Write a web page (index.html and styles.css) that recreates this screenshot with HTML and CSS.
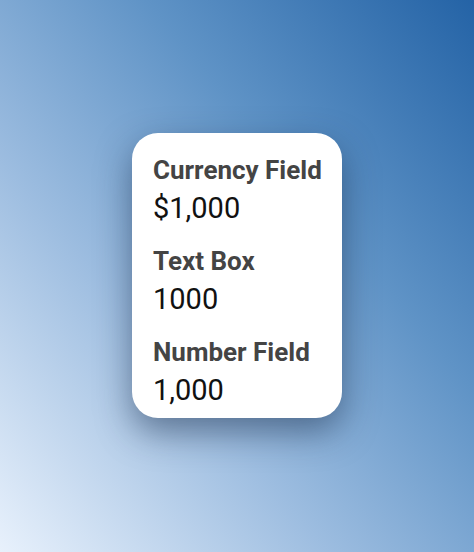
FILE: index.html
```html
<!DOCTYPE html>
<html>
<head>
<meta charset="utf-8">
<link rel="stylesheet" href="styles.css">
</head>
<body>
<div class="stage">
  <div class="card">
    <div class="field">
      <div class="label">Currency Field</div>
      <div class="value">$1,000</div>
    </div>
    <div class="field">
      <div class="label">Text Box</div>
      <div class="value">1000</div>
    </div>
    <div class="field">
      <div class="label">Number Field</div>
      <div class="value">1,000</div>
    </div>
  </div>
</div>
</body>
</html>
```
FILE: styles.css
```css
html, body {
  margin: 0;
  padding: 0;
  width: 474px;
  height: 552px;
  overflow: hidden;
}
body {
  font-family: Roboto, "Liberation Sans", sans-serif;
}
.stage {
  width: 474px;
  height: 552px;
  background: linear-gradient(50deg, #e8f1fc 0%, #9dbde0 35%, #5f93c6 65%, #2463a6 100%);
  display: flex;
  justify-content: center;
  padding-top: 133px;
  box-sizing: border-box;
}
.card {
  width: 210px;
  height: 285px;
  box-sizing: border-box;
  background: #fff;
  border-radius: 26px;
  box-shadow: 0 14px 34px rgba(20, 40, 70, 0.5);
  padding: 22px 0 0 21px;
  display: flex;
  flex-direction: column;
  gap: 15px;
}
.field {
  display: flex;
  flex-direction: column;
}
.label {
  font-size: 26px;
  font-weight: 700;
  color: #444;
  line-height: 30px;
  white-space: nowrap;
}
.value {
  font-size: 29px;
  color: #111;
  line-height: 46px;
}
```
